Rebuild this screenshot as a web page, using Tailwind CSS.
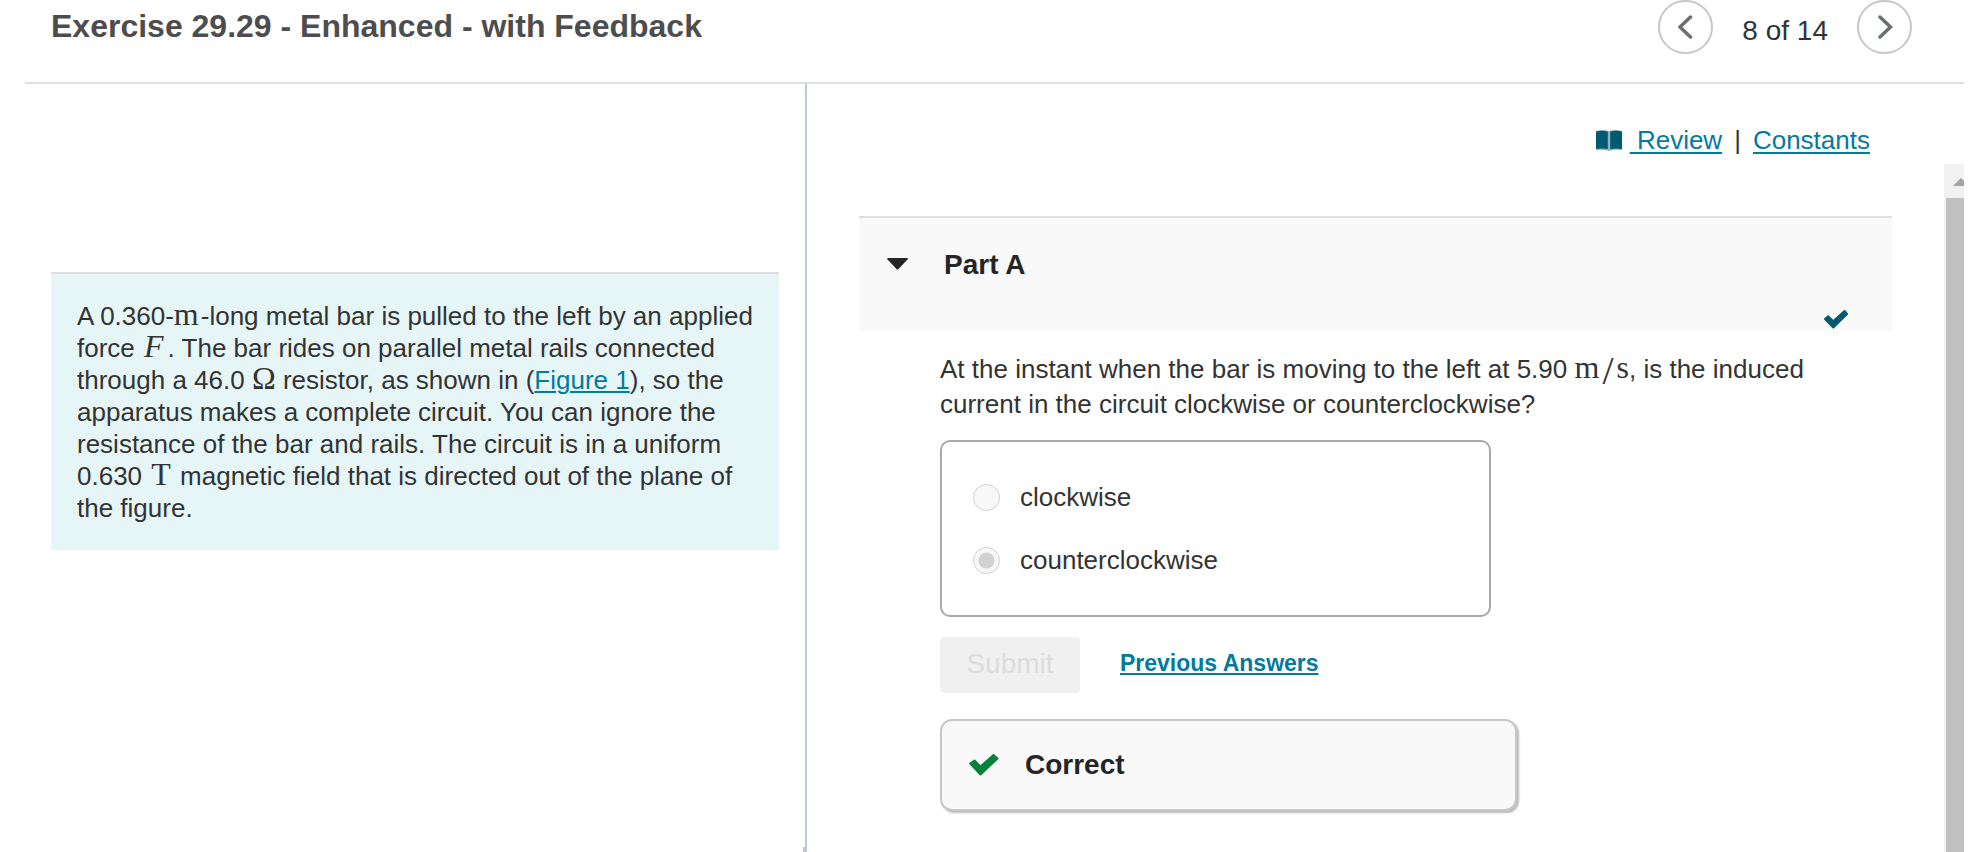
<!DOCTYPE html>
<html lang="en">
<head>
  <meta charset="UTF-8" />
  <meta name="viewport" content="width=device-width, initial-scale=1.0">
  <title>Exercise 29.29 - Enhanced - with Feedback</title>
  <script src="https://cdn.jsdelivr.net/npm/@tailwindcss/browser@4"></script>
</head>
<body class="min-h-screen flex flex-col bg-white pl-[25px] pr-2 font-['Liberation_Sans',Arial,sans-serif] text-[26px] text-[#333]">

  <!-- Title and pager -->
  <header class="flex items-start justify-between h-[84px] border-b-2 border-[#dedede] pl-[26px] pr-[52px]">
    <h1 class="pt-2 text-[32px] leading-9 font-bold text-[#4d4d4d]">Exercise 29.29 - Enhanced - with Feedback</h1>
    <nav class="flex items-center gap-[29px]" aria-label="Items">
      <button type="button" aria-label="Previous item" class="flex items-center justify-center w-[55px] h-[54px] rounded-full border-2 border-[#c7c7c7]">
        <svg class="w-4 h-6" viewBox="0 0 16 24" fill="none" stroke="#6a7070" stroke-width="3.500" stroke-linecap="round"><path d="M12.500 2 L2 12 L12.500 22" /></svg>
      </button>
      <span class="pt-2 text-[28px] leading-8">8 of 14</span>
      <button type="button" aria-label="Next item" class="flex items-center justify-center w-[55px] h-[54px] rounded-full border-2 border-[#c7c7c7]">
        <svg class="w-4 h-6" viewBox="0 0 16 24" fill="none" stroke="#6a7070" stroke-width="3.500" stroke-linecap="round"><path d="M3 2 L13.500 12 L3 22" /></svg>
      </button>
    </nav>
  </header>

  <main class="flex-1 grid grid-cols-[782fr_1157fr]">
    <!-- Problem statement -->
    <section class="relative border-r-2 border-[#b8cbdc] px-[26px] pt-[188px]">
      <div class="border-t-2 border-[#dedede] bg-[#e6f6f7] py-[26px] pl-[26px] pr-4">
        <p class="leading-8">A 0.360-<span class="font-['Liberation_Serif',serif] text-[32px] leading-[0] pr-0.5">m</span>-long metal bar is pulled to the left by an applied force <i class="font-['Liberation_Serif',serif] text-[32px] leading-[0] px-0.5 pr-1">F</i>. The bar rides on parallel metal rails connected through a 46.0 <span class="font-['Liberation_Serif',serif] text-[32px] leading-[0]">Ω</span> resistor, as shown in (<a href="#figure1" class="text-[#047a9c] underline decoration-2 underline-offset-2">Figure 1</a>), so the apparatus makes a complete circuit. You can ignore the resistance of the bar and rails. The circuit is in a uniform 0.630 <span class="font-['Liberation_Serif',serif] text-[32px] leading-[0] px-0.5">T</span> magnetic field that is directed out of the plane of the figure.</p>
      </div>
      <span class="absolute bottom-0 -right-0.5 w-1 h-[5px] bg-[#b8cbdc]"></span>
    </section>

    <section class="flex flex-col">
      <div class="flex justify-end items-center h-20 pt-[41px] pr-[94px] pb-[9px] leading-[30px]">
        <svg class="w-[26px] h-[21px] mr-2" viewBox="0 0 26 21">
          <path fill="#8fb5bf" d="M0 1 Q6 -1 13 1 Q20 -1 26 1 V20 Q20 19 13 21 Q6 19 0 20 Z" />
          <path fill="#005a70" d="M0 1.500 Q6 0 11.800 1.500 V19 Q6 18 0 19 Z M14.200 1.500 Q20 0 26 1.500 V19 Q20 18 14.200 19 Z" />
        </svg>
        <a href="#review" class="text-[#047a9c] underline decoration-2 underline-offset-3">&nbsp;Review</a>
        <span class="px-3">|</span>
        <a href="#constants" class="text-[#047a9c] underline decoration-2 underline-offset-3">Constants</a>
      </div>

      <div class="flex-1 flex">
        <div class="flex-1 px-[52px] pt-[52px]">
          <!-- Part header -->
          <div class="border-t-2 border-[#dedede] bg-[#f9f9f9] pt-[31px] pb-[2px] text-[#252525]">
            <h2>
              <button type="button" aria-expanded="true" class="flex items-center pl-7 text-[28px] leading-8 font-bold">
                <svg class="w-[21px] h-3.5 mr-9" viewBox="0 0 21 14"><path fill="#252525" d="M1 0 H20 Q21.400 0.300 20.500 1.500 L11.500 11 Q10.500 12 9.500 11 L0.500 1.500 Q-0.400 0.300 1 0 Z" /></svg>
                Part A
              </button>
            </h2>
            <div class="flex justify-end pt-[29px] pr-11">
              <svg class="w-6 h-[19px]" viewBox="0 0 24 19"><path fill="#005a70" stroke="#005a70" stroke-width="2" stroke-linejoin="round" d="M1 9 L4.200 6.200 L9.200 11.200 L20.500 1 L23 4 L9.300 17.500 Z" /></svg>
            </div>
          </div>

          <div class="pl-[81px]">
            <p class="mt-[21px] leading-[35px] pr-16">At the instant when the bar is moving to the left at 5.90 <span class="font-['Liberation_Serif',serif] text-[32px] leading-[0]">m<span class="text-[40px] align-middle px-[3px]">/</span>s</span>, is the induced current in the circuit clockwise or counterclockwise?</p>

            <form>
              <fieldset class="mt-[18px] flex flex-col gap-[27px] w-full max-w-[551px] border-2 border-[#a9a9a9] rounded-[10px] pl-[31px] py-[37px] leading-9">
                <label class="flex items-center gap-5">
                  <input type="radio" name="direction" disabled class="w-[27px] h-[27px]">
                  clockwise
                </label>
                <label class="flex items-center gap-5">
                  <input type="radio" name="direction" checked disabled class="w-[27px] h-[27px]">
                  counterclockwise
                </label>
              </fieldset>

              <div class="flex items-center gap-10 mt-5">
                <button type="submit" disabled class="w-[140px] h-14 rounded-[4px] bg-[#f0f0f0] pb-0.5 text-[28px] text-[#dcdcdc]">Submit</button>
                <a href="#previous" class="pb-1 text-[23px] leading-7 font-bold text-[#047a9c] underline decoration-2 underline-offset-2">Previous Answers</a>
              </div>
            </form>

            <!-- Result -->
            <div class="mt-[26px] flex items-center w-full max-w-[577px] border-2 border-[#c7c7c7] rounded-xl bg-[#f9f9f9] shadow-[2px_2px_2px_#bbb] pl-[27px] py-[26px] text-[28px] leading-9 font-bold text-[#252525]">
              <svg class="w-[30px] h-[22px] mr-[26px]" viewBox="0 0 30 22"><path fill="#038238" stroke="#038238" stroke-width="2" stroke-linejoin="round" d="M1.200 9.500 L5.500 6.500 L11.500 12.500 L24.500 1 L28.500 4.500 L11.500 20.500 Z" /></svg>
              Correct
            </div>
          </div>
        </div>

        <!-- Scrollbar, cut by the right edge -->
        <div class="w-5 flex flex-col bg-[#f1f1f1] overflow-hidden">
          <svg class="w-5 h-[34px]" viewBox="0 0 20 34"><path fill="#a3a3a3" d="M9 22 L17 14 L25 22 Z" /></svg>
          <div class="flex-1 ml-0.5 bg-[#c1c1c1]"></div>
        </div>
      </div>
    </section>
  </main>
</body>
</html>
